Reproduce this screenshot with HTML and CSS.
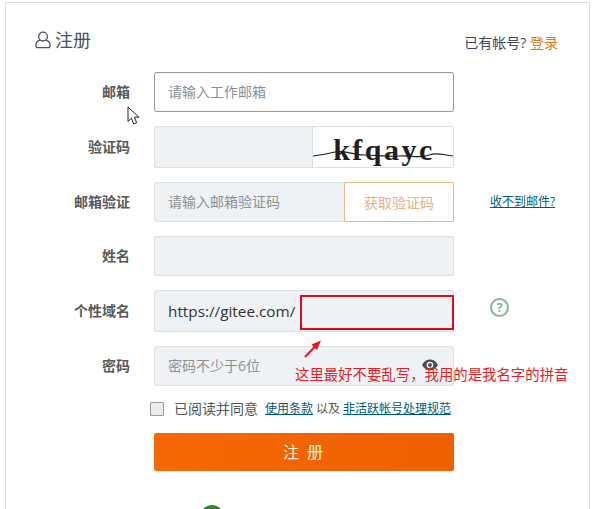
FILE: index.html
```html
<!DOCTYPE html>
<html lang="zh-CN">
<head>
<meta charset="utf-8">
<title>注册</title>
<link rel="stylesheet" href="styles.css">
</head>
<body>
<main class="card">
  <header class="head">
    <h1 class="title">
      <svg class="user" viewBox="0 0 16 18" width="16" height="18"><circle cx="8" cy="5.6" r="4.4"/><path d="M5 9.2C2.6 10 1 11.5 1 13.6v1.2C1 16 1.8 16.7 3 16.7h10c1.2 0 2-.7 2-1.9v-1.2c0-2.1-1.6-3.6-4-4.4"/></svg>
      <span>注册</span>
    </h1>
    <p class="have">已有帐号? <a class="login">登录</a></p>
  </header>
  <form class="form">
    <div class="row">
      <label class="label">邮箱</label>
      <div class="field active"><span class="ph">请输入工作邮箱</span></div>
    </div>
    <div class="row tall">
      <label class="label">验证码</label>
      <div class="field split">
        <div class="grow"></div>
        <div class="captcha">
          <svg class="noise" viewBox="0 0 140 40" preserveAspectRatio="none"><path d="M0 29C8 28 14 27 22 25c10-2 18 3 30 3s22 2 34 1 20 3 30-1c8-3 14 0 24 1"/></svg>
          <span class="code">kfqayc</span>
        </div>
      </div>
    </div>
    <div class="row">
      <label class="label">邮箱验证</label>
      <div class="field split">
        <div class="grow pad"><span class="ph">请输入邮箱验证码</span></div>
        <div class="getcode">获取验证码</div>
      </div>
      <a class="side">收不到邮件?</a>
    </div>
    <div class="row">
      <label class="label">姓名</label>
      <div class="field"></div>
    </div>
    <div class="row tall">
      <label class="label">个性域名</label>
      <div class="field domain"><span class="url">https://gitee.com/</span></div>
      <span class="help">?</span>
    </div>
    <div class="row">
      <label class="label">密码</label>
      <div class="field"><span class="ph">密码不少于6位</span>
        <svg class="eye" viewBox="0 0 16 12" width="16" height="12"><path d="M0 6C2 2.4 4.8.6 8 .6s6 1.8 8 5.4c-2 3.6-4.800 5.400-8 5.400S2 9.600 0 6z"/><circle cx="8" cy="6" r="3.300" fill="#f0f3f5"/><circle cx="8" cy="6" r="1.900"/></svg>
      </div>
    </div>
    <div class="agree">
      <span class="check"></span>
      <span class="agree-text">已阅读并同意</span>
      <a class="terms">使用条款</a>
      <span class="small">以及</span>
      <a class="terms">非活跃帐号处理规范</a>
    </div>
    <button class="submit" type="button">注 册</button>
  </form>
  <div class="badge"></div>
</main>
<svg class="cursor" viewBox="0 0 13 20" width="13" height="20"><path d="M1 1v14.500l3.400-3.200 2.300 5.700 3-1.300-2.400-5.500h4.700z"/></svg>
<div class="redbox"></div>
<svg class="arrow" viewBox="0 0 18 18" width="18" height="18"><path d="M1 17 11.500 6" /><path class="tip" d="M17 .5 7.500 4.500l5.500 5.500z"/></svg>
<p class="note">这里最好不要乱写，我用的是我名字的拼音</p>
</body>
</html>
```
FILE: styles.css
```css
* { box-sizing: border-box; }
html, body { margin: 0; height: 509px; overflow: hidden; }
body {
  position: relative;
  background: #fff;
  font-family: "Open Sans", "Noto Sans CJK SC", sans-serif;
  color: #40485b;
  font-size: 14px;
}
.card {
  margin: 2px 5px 0;
  width: 585px;
  height: 520px;
  border: 1px solid #dcdcdc;
  border-bottom: 0;
  padding: 0 0 0 29px;
  position: relative;
}
.head {
  display: flex;
  justify-content: space-between;
  align-items: flex-start;
  height: 69px;
  padding-right: 31px;
}
.title {
  display: flex;
  align-items: center;
  gap: 4px;
  margin: 25px 0 0;
  font-size: 18px;
  font-weight: 400;
  line-height: 24px;
  color: #4a5160;
}
.user { fill: none; stroke: #4a5160; stroke-width: 1.300; }
.have { margin: 30px 0 0; font-size: 14px; line-height: 20px; }
.login { color: #d9781c; }
.form { display: flex; flex-direction: column; gap: 14px; }
.row { display: flex; align-items: center; height: 40px; }
.tall { height: 42px; }
.label {
  width: 95px;
  margin-right: 24px;
  padding-bottom: 2px;
  text-align: right;
  font-size: 14px;
  font-weight: 700;
  color: #595959;
}
.field {
  position: relative;
  display: flex;
  align-items: center;
  width: 300px;
  height: 100%;
  padding-left: 13px;
  background: #eff2f4;
  border: 1px solid #dbe0e3;
  border-radius: 2px;
}
.field.active { background: #fff; border-color: #9a9a9a; }
.ph { padding-bottom: 2px; font-size: 14px; color: #8c9094; }
.split { padding: 0; }
.grow { flex: 1; height: 100%; display: flex; align-items: center; }
.pad { padding-left: 13px; }
.captcha {
  position: relative;
  width: 141px;
  height: 100%;
  background: #fff;
  border-left: 1px solid #dbe0e3;
  display: flex;
  align-items: center;
  justify-content: center;
}
.noise { position: absolute; inset: 0; width: 100%; height: 100%; fill: none; stroke: #222; stroke-width: 1.200; }
.code {
  position: relative;
  margin: 5px 0 0 2px;
  font-family: "Liberation Serif", serif;
  font-weight: 700;
  font-size: 30px;
  letter-spacing: 2.500px;
  color: #1f1f1f;
  line-height: 1;
}
.getcode {
  width: 110px;
  height: 40px;
  margin: -1px;
  display: flex;
  align-items: center;
  justify-content: center;
  background: #fff;
  border: 1px solid #e6b98a;
  border-radius: 2px;
  color: #e9b183;
  font-size: 14px;
}
.side { margin-left: 36px; padding-bottom: 2px; font-size: 12px; color: #005a7a; text-decoration: underline; }
.url { padding-bottom: 1px; font-size: 15.300px; color: #333; }
.help {
  width: 19px;
  height: 19px;
  margin-left: 36px;
  margin-top: -8px;
  display: flex;
  align-items: center;
  justify-content: center;
  border: 2px solid #88b89a;
  border-radius: 50%;
  font-size: 13px;
  font-weight: 700;
  line-height: 1;
  color: #88b89a;
}
.eye { position: absolute; right: 15px; top: 12px; fill: #454f5b; }
.agree {
  display: flex;
  align-items: center;
  height: 20px;
  margin: -1px 0 0 115px;
  font-size: 12px;
  color: #555;
  gap: 3px;
}
.check {
  width: 14px;
  height: 14px;
  margin-right: 7px;
  background: #ebebeb;
  border: 1px solid #9a9a9a;
  border-radius: 1px;
}
.agree-text { margin-right: 4px; padding-bottom: 2px; font-size: 14px; }
.small { padding-bottom: 2px; }
.terms { padding-bottom: 2px; color: #005a7a; text-decoration: underline; }
.submit {
  width: 300px;
  height: 38px;
  margin: 0 0 0 119px;
  padding: 0 0 2px;
  border: 0;
  border-radius: 2px;
  background: linear-gradient(90deg, #f56803, #ef6100);
  color: #fff3e2;
  font-family: inherit;
  font-size: 16px;
  letter-spacing: 2px;
}
.badge {
  position: absolute;
  left: 194px;
  top: 502px;
  width: 24px;
  height: 24px;
  border-radius: 50%;
  background: #2e8b2a;
}
.cursor { position: absolute; left: 127px; top: 106px; fill: #fff; stroke: #222; stroke-width: 1; }
.redbox { position: absolute; left: 300px; top: 295px; width: 154px; height: 35px; border: 2px solid #e30b17; }
.arrow { position: absolute; left: 304px; top: 340px; fill: none; stroke: #e8141c; stroke-width: 2; }
.arrow .tip { fill: #e8141c; stroke: none; }
.note { position: absolute; left: 295px; top: 365px; margin: 0; font-size: 14.400px; line-height: 20px; color: #ee1c25; white-space: nowrap; }
```
